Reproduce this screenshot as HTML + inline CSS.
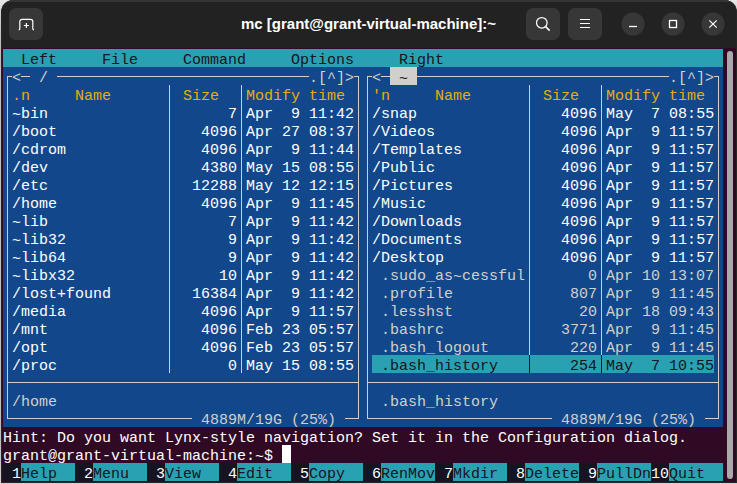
<!DOCTYPE html>
<html><head><meta charset="utf-8"><style>
html,body{margin:0;padding:0;}
body{width:737px;height:484px;overflow:hidden;background:linear-gradient(#e8e8e8 0px,#d0d0d0 14px,#bdbdbd 40px,#bdbdbd 440px,#d0d0d0 484px);position:relative;}
#win{position:absolute;left:1px;top:0px;width:736px;height:483px;box-sizing:border-box;border:1px solid #262626;border-top:none;background:#222;border-radius:12px 12px 0 0;overflow:hidden;}
#tb{position:absolute;left:0;top:0;width:736px;height:48px;background:linear-gradient(#353535 0px,#333 1.5px,#222 2.5px,#222 100%);}
.btn{position:absolute;background:#373737;border-radius:7px;}
.cb{position:absolute;width:24px;height:24px;border-radius:50%;background:#373737;}
#title{position:absolute;left:0;top:15px;width:737px;text-align:center;font:bold 15px "Liberation Sans",sans-serif;color:#ffffff;}
.b{position:absolute;height:18px;}
.l{position:absolute;background:#d0cfcc;}
.t{position:absolute;height:18px;line-height:18px;font-family:"Liberation Mono",monospace;font-size:15px;white-space:pre;}
span.tl{position:relative;top:1px;}
#sb{position:absolute;left:727px;top:51px;width:6px;height:428px;border-radius:3px;background:#aaaaaa;}
</style></head><body>
<div id="win">
<div id="tb"></div><div style="position:absolute;left:0;top:48px;width:734px;height:434px;background:#300a24"></div>
</div>
<div id="title">mc [grant@grant-virtual-machine]:~</div>
<div class="btn" style="left:9px;top:8px;width:34px;height:32px"></div>
<svg style="position:absolute;left:0;top:0" width="737" height="48">
<path d="M18.6 29.9 q1.2 0 1.2 -1.2 V21.6 a2.2 2.2 0 0 1 2.2 -2.2 h8.6 a2.2 2.2 0 0 1 2.2 2.2 V28.7 q0 1.2 1.2 1.2" fill="none" stroke="#fff" stroke-width="1.2"/>
<path d="M26.4 23 v5 M23.9 25.5 h5" stroke="#fff" stroke-width="1.2"/>
</svg>
<div class="btn" style="left:526px;top:8px;width:34px;height:32px"></div>
<div class="btn" style="left:568px;top:8px;width:34px;height:32px"></div>
<svg style="position:absolute;left:0;top:0" width="737" height="48">
<circle cx="633" cy="24" r="11.6" fill="#373737"/><circle cx="673" cy="24" r="11.6" fill="#373737"/><circle cx="713" cy="24" r="11.6" fill="#373737"/>
<circle cx="541.8" cy="22.8" r="5.3" fill="none" stroke="#fff" stroke-width="1.25"/>
<path d="M545.6 26.6 L549.6 30.6" stroke="#fff" stroke-width="1.6"/>
<path d="M580 19.5 h10 M580 23.5 h10 M580 27.5 h10" stroke="#fff" stroke-width="1.2"/>
<path d="M629 26.5 h8" stroke="#fff" stroke-width="1.3"/>
<rect x="669.5" y="20.5" width="7" height="7" fill="none" stroke="#fff" stroke-width="1.3"/>
<path d="M709.3 20.3 L716.7 27.7 M716.7 20.3 L709.3 27.7" stroke="#fff" stroke-width="1.2"/>
</svg>
<div id="term" style="position:absolute;left:0;top:0;">
<div class="b" style="left:3px;top:49px;width:720px;background:#2aa1b3"></div>
<div class="b" style="left:3px;top:67px;width:387px;background:#12488b"></div>
<div class="b" style="left:390px;top:67px;width:27px;background:#d0cfcc"></div>
<div class="b" style="left:417px;top:67px;width:306px;background:#12488b"></div>
<div class="b" style="left:3px;top:85px;width:720px;background:#12488b"></div>
<div class="b" style="left:3px;top:103px;width:720px;background:#12488b"></div>
<div class="b" style="left:3px;top:121px;width:720px;background:#12488b"></div>
<div class="b" style="left:3px;top:139px;width:720px;background:#12488b"></div>
<div class="b" style="left:3px;top:157px;width:720px;background:#12488b"></div>
<div class="b" style="left:3px;top:175px;width:720px;background:#12488b"></div>
<div class="b" style="left:3px;top:193px;width:720px;background:#12488b"></div>
<div class="b" style="left:3px;top:211px;width:720px;background:#12488b"></div>
<div class="b" style="left:3px;top:229px;width:720px;background:#12488b"></div>
<div class="b" style="left:3px;top:247px;width:720px;background:#12488b"></div>
<div class="b" style="left:3px;top:265px;width:720px;background:#12488b"></div>
<div class="b" style="left:3px;top:283px;width:720px;background:#12488b"></div>
<div class="b" style="left:3px;top:301px;width:720px;background:#12488b"></div>
<div class="b" style="left:3px;top:319px;width:720px;background:#12488b"></div>
<div class="b" style="left:3px;top:337px;width:720px;background:#12488b"></div>
<div class="b" style="left:3px;top:355px;width:369px;background:#12488b"></div>
<div class="b" style="left:372px;top:355px;width:342px;background:#2aa1b3"></div>
<div class="b" style="left:714px;top:355px;width:9px;background:#12488b"></div>
<div class="b" style="left:3px;top:373px;width:720px;background:#12488b"></div>
<div class="b" style="left:3px;top:391px;width:720px;background:#12488b"></div>
<div class="b" style="left:3px;top:409px;width:720px;background:#12488b"></div>
<div class="b" style="left:282px;top:445px;width:9px;background:#ffffff"></div>
<div class="b" style="left:3px;top:463px;width:18px;background:#171421"></div>
<div class="b" style="left:21px;top:463px;width:54px;background:#2aa1b3"></div>
<div class="b" style="left:75px;top:463px;width:18px;background:#171421"></div>
<div class="b" style="left:93px;top:463px;width:54px;background:#2aa1b3"></div>
<div class="b" style="left:147px;top:463px;width:18px;background:#171421"></div>
<div class="b" style="left:165px;top:463px;width:54px;background:#2aa1b3"></div>
<div class="b" style="left:219px;top:463px;width:18px;background:#171421"></div>
<div class="b" style="left:237px;top:463px;width:54px;background:#2aa1b3"></div>
<div class="b" style="left:291px;top:463px;width:18px;background:#171421"></div>
<div class="b" style="left:309px;top:463px;width:54px;background:#2aa1b3"></div>
<div class="b" style="left:363px;top:463px;width:18px;background:#171421"></div>
<div class="b" style="left:381px;top:463px;width:54px;background:#2aa1b3"></div>
<div class="b" style="left:435px;top:463px;width:18px;background:#171421"></div>
<div class="b" style="left:453px;top:463px;width:54px;background:#2aa1b3"></div>
<div class="b" style="left:507px;top:463px;width:18px;background:#171421"></div>
<div class="b" style="left:525px;top:463px;width:54px;background:#2aa1b3"></div>
<div class="b" style="left:579px;top:463px;width:18px;background:#171421"></div>
<div class="b" style="left:597px;top:463px;width:54px;background:#2aa1b3"></div>
<div class="b" style="left:651px;top:463px;width:18px;background:#171421"></div>
<div class="b" style="left:669px;top:463px;width:54px;background:#2aa1b3"></div>
<div class="l" style="left:7px;top:76px;width:1px;height:1px"></div>
<div class="l" style="left:7px;top:76px;width:5px;height:1px"></div>
<div class="l" style="left:21px;top:76px;width:9px;height:1px"></div>
<div class="l" style="left:57px;top:76px;width:252px;height:1px"></div>
<div class="l" style="left:354px;top:76px;width:5px;height:1px"></div>
<div class="l" style="left:7px;top:76px;width:1px;height:343px"></div>
<div class="l" style="left:358px;top:76px;width:1px;height:343px"></div>
<div class="l" style="left:7px;top:382px;width:352px;height:1px"></div>
<div class="l" style="left:7px;top:418px;width:185px;height:1px"></div>
<div class="l" style="left:345px;top:418px;width:14px;height:1px"></div>
<div class="l" style="left:169px;top:85px;width:1px;height:288px"></div>
<div class="l" style="left:241px;top:85px;width:1px;height:288px"></div>
<div class="l" style="left:367px;top:76px;width:1px;height:1px"></div>
<div class="l" style="left:367px;top:76px;width:5px;height:1px"></div>
<div class="l" style="left:381px;top:76px;width:9px;height:1px"></div>
<div class="l" style="left:417px;top:76px;width:252px;height:1px"></div>
<div class="l" style="left:714px;top:76px;width:5px;height:1px"></div>
<div class="l" style="left:367px;top:76px;width:1px;height:343px"></div>
<div class="l" style="left:718px;top:76px;width:1px;height:343px"></div>
<div class="l" style="left:367px;top:382px;width:352px;height:1px"></div>
<div class="l" style="left:367px;top:418px;width:185px;height:1px"></div>
<div class="l" style="left:705px;top:418px;width:14px;height:1px"></div>
<div class="l" style="left:529px;top:85px;width:1px;height:270px"></div>
<div class="l" style="left:601px;top:85px;width:1px;height:270px"></div>
<div class="l" style="left:529px;top:355px;width:1px;height:18px;background:#171421"></div>
<div class="l" style="left:601px;top:355px;width:1px;height:18px;background:#171421"></div>
<div class="t" style="left:21px;top:52px;color:#171421">Left     File     Command     Options     Right</div>
<div class="t" style="left:12px;top:70px;color:#d0cfcc">&lt;  /                             .[^]&gt;  &lt;</div>
<div class="t" style="left:399px;top:70px;color:#171421"><span class="tl">~</span></div>
<div class="t" style="left:669px;top:70px;color:#d0cfcc">.[^]&gt;</div>
<div class="t" style="left:12px;top:88px;color:#e9ad0c">.n     Name        Size   Modify time   &#x27;n     Name        Size   Modify time</div>
<div class="t" style="left:12px;top:106px;color:#ffffff"><span class="tl">~</span>bin                    7 Apr  9 11:42  /snap                4096 May  7 08:55</div>
<div class="t" style="left:12px;top:124px;color:#ffffff">/boot                4096 Apr 27 08:37  /Videos              4096 Apr  9 11:57</div>
<div class="t" style="left:12px;top:142px;color:#ffffff">/cdrom               4096 Apr  9 11:44  /Templates           4096 Apr  9 11:57</div>
<div class="t" style="left:12px;top:160px;color:#ffffff">/dev                 4380 May 15 08:55  /Public              4096 Apr  9 11:57</div>
<div class="t" style="left:12px;top:178px;color:#ffffff">/etc                12288 May 12 12:15  /Pictures            4096 Apr  9 11:57</div>
<div class="t" style="left:12px;top:196px;color:#ffffff">/home                4096 Apr  9 11:45  /Music               4096 Apr  9 11:57</div>
<div class="t" style="left:12px;top:214px;color:#ffffff"><span class="tl">~</span>lib                    7 Apr  9 11:42  /Downloads           4096 Apr  9 11:57</div>
<div class="t" style="left:12px;top:232px;color:#ffffff"><span class="tl">~</span>lib32                  9 Apr  9 11:42  /Documents           4096 Apr  9 11:57</div>
<div class="t" style="left:12px;top:250px;color:#ffffff"><span class="tl">~</span>lib64                  9 Apr  9 11:42  /Desktop             4096 Apr  9 11:57</div>
<div class="t" style="left:12px;top:268px;color:#ffffff"><span class="tl">~</span>libx32                10 Apr  9 11:42</div>
<div class="t" style="left:381px;top:268px;color:#d0cfcc">.sudo_as<span class="tl">~</span>cessful       0 Apr 10 13:07</div>
<div class="t" style="left:12px;top:286px;color:#ffffff">/lost+found         16384 Apr  9 11:42</div>
<div class="t" style="left:381px;top:286px;color:#d0cfcc">.profile             807 Apr  9 11:45</div>
<div class="t" style="left:12px;top:304px;color:#ffffff">/media               4096 Apr  9 11:57</div>
<div class="t" style="left:381px;top:304px;color:#d0cfcc">.lesshst              20 Apr 18 09:43</div>
<div class="t" style="left:12px;top:322px;color:#ffffff">/mnt                 4096 Feb 23 05:57</div>
<div class="t" style="left:381px;top:322px;color:#d0cfcc">.bashrc             3771 Apr  9 11:45</div>
<div class="t" style="left:12px;top:340px;color:#ffffff">/opt                 4096 Feb 23 05:57</div>
<div class="t" style="left:381px;top:340px;color:#d0cfcc">.bash_logout         220 Apr  9 11:45</div>
<div class="t" style="left:12px;top:358px;color:#ffffff">/proc                   0 May 15 08:55</div>
<div class="t" style="left:381px;top:358px;color:#171421">.bash_history        254 May  7 10:55</div>
<div class="t" style="left:12px;top:394px;color:#d0cfcc">/home                                    .bash_history</div>
<div class="t" style="left:201px;top:412px;color:#d0cfcc">4889M/19G (25%)                         4889M/19G (25%)</div>
<div class="t" style="left:3px;top:430px;color:#ffffff">Hint: Do you want Lynx-style navigation? Set it in the Configuration dialog.</div>
<div class="t" style="left:3px;top:448px;color:#ffffff">grant@grant-virtual-machine:<span class="tl">~</span>$</div>
<div class="t" style="left:12px;top:466px;color:#ffffff">1</div>
<div class="t" style="left:21px;top:466px;color:#171421">Help</div>
<div class="t" style="left:84px;top:466px;color:#ffffff">2</div>
<div class="t" style="left:93px;top:466px;color:#171421">Menu</div>
<div class="t" style="left:156px;top:466px;color:#ffffff">3</div>
<div class="t" style="left:165px;top:466px;color:#171421">View</div>
<div class="t" style="left:228px;top:466px;color:#ffffff">4</div>
<div class="t" style="left:237px;top:466px;color:#171421">Edit</div>
<div class="t" style="left:300px;top:466px;color:#ffffff">5</div>
<div class="t" style="left:309px;top:466px;color:#171421">Copy</div>
<div class="t" style="left:372px;top:466px;color:#ffffff">6</div>
<div class="t" style="left:381px;top:466px;color:#171421">RenMov</div>
<div class="t" style="left:444px;top:466px;color:#ffffff">7</div>
<div class="t" style="left:453px;top:466px;color:#171421">Mkdir</div>
<div class="t" style="left:516px;top:466px;color:#ffffff">8</div>
<div class="t" style="left:525px;top:466px;color:#171421">Delete</div>
<div class="t" style="left:588px;top:466px;color:#ffffff">9</div>
<div class="t" style="left:597px;top:466px;color:#171421">PullDn</div>
<div class="t" style="left:651px;top:466px;color:#ffffff">10</div>
<div class="t" style="left:669px;top:466px;color:#171421">Quit</div>
</div>
<div id="sb"></div>
</body></html>
